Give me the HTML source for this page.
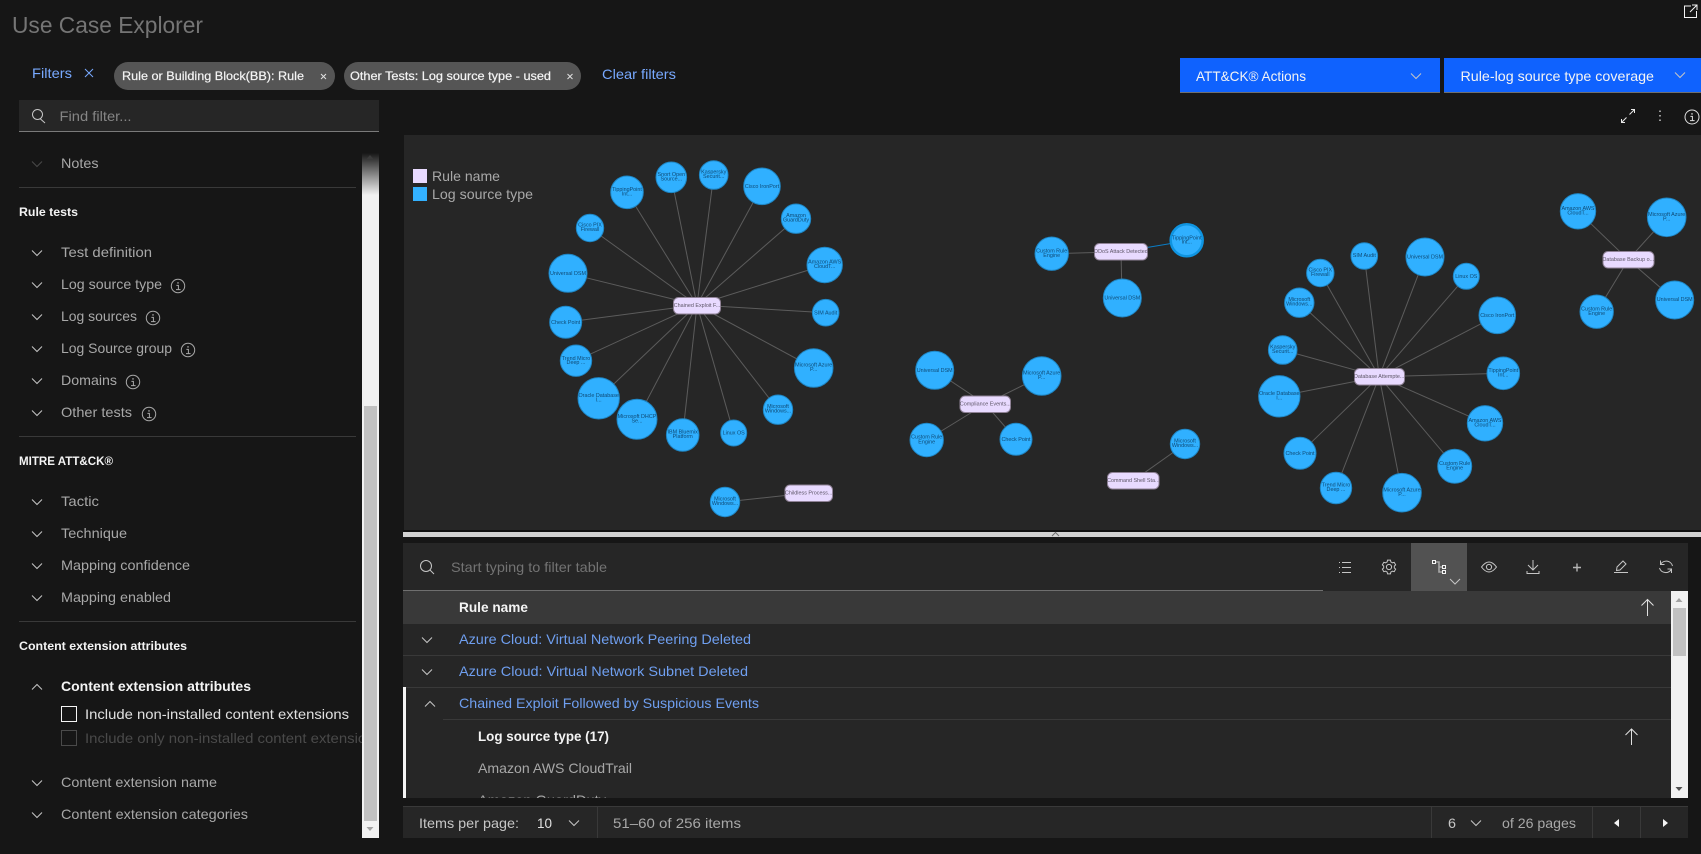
<!DOCTYPE html>
<html lang="en">
<head>
<meta charset="utf-8">
<title>Use Case Explorer</title>
<style>
html,body{margin:0;padding:0;background:#161616;width:1701px;height:854px;overflow:hidden}
svg{display:block;font-family:"Liberation Sans",Arial,sans-serif}
text{white-space:pre}
.t14{font-size:14px}
.t12{font-size:12px}
.dim{fill:#a8a8a8}
.mid{fill:#c6c6c6}
.link{fill:#78a9ff}
.b{font-weight:700;fill:#f4f4f4}
.ico{fill:none;stroke:#c6c6c6;stroke-width:1}
.e{stroke:#5c5c5c;stroke-width:1}
.c{fill:#30b0ff;stroke:#1f86c4;stroke-width:1}
.r{fill:#e8daff;stroke:#8f8296;stroke-width:1}
.n{font-size:5.4px;text-anchor:middle;fill:#0f4a75}
.m{font-size:5.4px;text-anchor:middle;fill:#5c5566}
.soft{filter:blur(.3px)}
</style>
</head>
<body>
<svg xmlns="http://www.w3.org/2000/svg" width="1701" height="854" viewBox="0 0 1701 854">
<defs>
<g id="cd"><path d="M-5-2.5 0 2.5 5-2.5" fill="none" stroke="#c6c6c6"/></g>
<g id="cu"><path d="M-5 2.5 0-2.5 5 2.5" fill="none" stroke="#c6c6c6"/></g>
<g id="inf"><circle r="6.7" fill="none" stroke="#a8a8a8"/><path d="M-1.6-.6H.4V3.6M-2 3.6H2.6" fill="none" stroke="#a8a8a8"/><rect x="-.7" y="-3.8" width="1.4" height="1.4" fill="#a8a8a8"/></g>
<linearGradient id="fade" x1="0" y1="0" x2="0" y2="1"><stop offset="0" stop-color="#161616"/><stop offset="1" stop-color="#f1f1f1"/></linearGradient>
<clipPath id="cl1"><rect x="0" y="140" width="362" height="714"/></clipPath>
<clipPath id="cl2"><rect x="403" y="591" width="1268" height="207"/></clipPath>
</defs>

<rect width="1701" height="854" fill="#161616"/>

<!-- Header -->
<text x="12" y="33" font-size="23" fill="#757575" textLength="191" lengthAdjust="spacingAndGlyphs">Use Case Explorer</text>
<path d="M1691 6H1684.5V17.5H1696.5V11M1690 12 1697 5M1692 5H1697V10" fill="none" stroke="#f4f4f4"/>

<!-- Filters bar -->
<text x="32" y="78" class="t14 link" textLength="40" lengthAdjust="spacingAndGlyphs">Filters</text>
<path d="M85 69 93 77M93 69 85 77" stroke="#78a9ff" fill="none"/>
<rect x="114" y="62" width="221" height="28" rx="14" fill="#555"/>
<text x="122" y="80" class="t12" fill="#f4f4f4" stroke="#f4f4f4" stroke-width=".2" textLength="182" lengthAdjust="spacingAndGlyphs">Rule or Building Block(BB): Rule</text>
<path d="M321 74 326 79M326 74 321 79" stroke="#e0e0e0" fill="none"/>
<rect x="344" y="62" width="237" height="28" rx="14" fill="#555"/>
<text x="350" y="80" class="t12" fill="#f4f4f4" stroke="#f4f4f4" stroke-width=".2" textLength="201" lengthAdjust="spacingAndGlyphs">Other Tests: Log source type - used</text>
<path d="M567.5 74 572.5 79M572.5 74 567.5 79" stroke="#e0e0e0" fill="none"/>
<text x="602" y="79" class="t14 link" textLength="74" lengthAdjust="spacingAndGlyphs">Clear filters</text>

<!-- Action buttons -->
<rect x="1180" y="58" width="260" height="35" fill="#0f62fe"/>
<rect x="1180" y="92" width="260" height="1" fill="#6f6f6f"/>
<text x="1196" y="81" class="t14" fill="#f4f4f4" textLength="110" lengthAdjust="spacingAndGlyphs">ATT&amp;CK® Actions</text>
<use href="#cd" x="1416" y="76"/>
<rect x="1444" y="58" width="257" height="35" fill="#0f62fe"/>
<rect x="1444" y="92" width="257" height="1" fill="#6f6f6f"/>
<text x="1460.5" y="81" class="t14" fill="#f4f4f4" textLength="193.5" lengthAdjust="spacingAndGlyphs">Rule-log source type coverage</text>
<use href="#cd" x="1680" y="75"/>

<!-- Graph toolbar icons -->
<path d="M1626.5 117.5 1621.5 122.5M1621.5 119V122.5H1625M1629.5 114.5 1634.5 109.5M1631 109.5H1634.5V113" fill="none" stroke="#e8e8e8"/>
<rect x="1659.25" y="110.5" width="1.5" height="1.5" fill="#c6c6c6"/><rect x="1659.25" y="115" width="1.5" height="1.5" fill="#c6c6c6"/><rect x="1659.25" y="119.5" width="1.5" height="1.5" fill="#c6c6c6"/>
<g transform="translate(1692 117)"><circle r="7" fill="none" stroke="#e0e0e0"/><path d="M-1.6-.6H.4V3.6M-2 3.6H2.6" fill="none" stroke="#e0e0e0"/><rect x="-.7" y="-3.8" width="1.4" height="1.4" fill="#e0e0e0"/></g>

<!-- Sidebar -->
<rect x="19" y="100" width="360" height="32" fill="#262626"/>
<rect x="19" y="131" width="360" height="1" fill="#7a7a7a"/>
<path d="M35.5 110a5 5 0 1 1 0 10a5 5 0 1 1 0-10M38.5 119.5 43 123.5" transform="translate(2 -.5)" fill="none" stroke="#c6c6c6"/>
<text x="59.5" y="121" class="t14" fill="#858585" textLength="72" lengthAdjust="spacingAndGlyphs">Find filter...</text>

<g clip-path="url(#cl1)">
<g transform="translate(37 164)"><path d="M-5-2.5 0 2.5 5-2.5" fill="none" stroke="#4a4a4a"/></g>
<text x="61" y="168" class="t14 dim" textLength="37.5" lengthAdjust="spacingAndGlyphs">Notes</text>
<rect x="19" y="187" width="337" height="1" fill="#393939"/>
<text x="19" y="216" class="t12 b" textLength="59" lengthAdjust="spacingAndGlyphs">Rule tests</text>

<use href="#cd" x="37" y="253"/><text x="61" y="257" class="t14 dim" textLength="91" lengthAdjust="spacingAndGlyphs">Test definition</text>
<use href="#cd" x="37" y="285"/><text x="61" y="289" class="t14 dim" textLength="101" lengthAdjust="spacingAndGlyphs">Log source type</text><use href="#inf" x="178" y="286"/>
<use href="#cd" x="37" y="317"/><text x="61" y="321" class="t14 dim" textLength="76" lengthAdjust="spacingAndGlyphs">Log sources</text><use href="#inf" x="153" y="318"/>
<use href="#cd" x="37" y="349"/><text x="61" y="353" class="t14 dim" textLength="111" lengthAdjust="spacingAndGlyphs">Log Source group</text><use href="#inf" x="188" y="350"/>
<use href="#cd" x="37" y="381"/><text x="61" y="385" class="t14 dim" textLength="56" lengthAdjust="spacingAndGlyphs">Domains</text><use href="#inf" x="133" y="382"/>
<use href="#cd" x="37" y="413"/><text x="61" y="417" class="t14 dim" textLength="71" lengthAdjust="spacingAndGlyphs">Other tests</text><use href="#inf" x="149" y="414"/>
<rect x="19" y="436" width="337" height="1" fill="#393939"/>
<text x="19" y="465" class="t12 b" textLength="94" lengthAdjust="spacingAndGlyphs">MITRE ATT&amp;CK®</text>

<use href="#cd" x="37" y="502"/><text x="61" y="506" class="t14 dim" textLength="38" lengthAdjust="spacingAndGlyphs">Tactic</text>
<use href="#cd" x="37" y="534"/><text x="61" y="538" class="t14 dim" textLength="66" lengthAdjust="spacingAndGlyphs">Technique</text>
<use href="#cd" x="37" y="566"/><text x="61" y="570" class="t14 dim" textLength="129" lengthAdjust="spacingAndGlyphs">Mapping confidence</text>
<use href="#cd" x="37" y="598"/><text x="61" y="602" class="t14 dim" textLength="110" lengthAdjust="spacingAndGlyphs">Mapping enabled</text>
<rect x="19" y="621" width="337" height="1" fill="#393939"/>
<text x="19" y="650" class="t12 b" textLength="168" lengthAdjust="spacingAndGlyphs">Content extension attributes</text>

<use href="#cu" x="37" y="687"/><text x="61" y="691" class="t14 b" textLength="190" lengthAdjust="spacingAndGlyphs">Content extension attributes</text>
<rect x="61.5" y="706.5" width="15" height="15" fill="none" stroke="#f4f4f4"/>
<text x="85" y="719" class="t14" fill="#e0e0e0" textLength="264" lengthAdjust="spacingAndGlyphs">Include non-installed content extensions</text>
<rect x="61.5" y="730.5" width="15" height="15" fill="none" stroke="#4a4a4a"/>
<text x="85" y="743" class="t14" fill="#4a4a4a" textLength="297" lengthAdjust="spacingAndGlyphs">Include only non-installed content extensions</text>
<use href="#cd" x="37" y="783"/><text x="61" y="787" class="t14 dim" textLength="156" lengthAdjust="spacingAndGlyphs">Content extension name</text>
<use href="#cd" x="37" y="815"/><text x="61" y="819" class="t14 dim" textLength="187" lengthAdjust="spacingAndGlyphs">Content extension categories</text>
</g>

<!-- Sidebar scrollbar -->
<rect x="362" y="153" width="17" height="685" fill="#f1f1f1"/>
<rect x="364" y="406" width="13" height="415" fill="#c1c1c1"/>
<rect x="362" y="153" width="17" height="42" fill="url(#fade)"/>
<path d="M366.5 159 370 155 373.5 159Z" fill="#3a3a3a"/>
<path d="M366.5 827H373.5L370 831Z" fill="#a3a3a3"/>

<!-- Graph panel -->
<rect x="404" y="135" width="1297" height="395" fill="#262626"/>
<rect x="413" y="169" width="14" height="14" fill="#e8daff"/>
<rect x="413" y="187" width="14" height="14" fill="#33b1ff"/>
<text x="432" y="181" class="t14 dim" textLength="68" lengthAdjust="spacingAndGlyphs">Rule name</text>
<text x="432" y="199" class="t14 dim" textLength="101" lengthAdjust="spacingAndGlyphs">Log source type</text>

<g class="soft">
<!-- Edges -->
<g class="e">
<line x1="697" y1="305" x2="627" y2="192.3"/><line x1="697" y1="305" x2="671.3" y2="177.3"/><line x1="697" y1="305" x2="713.7" y2="175"/><line x1="697" y1="305" x2="762" y2="186.3"/><line x1="697" y1="305" x2="796" y2="218.7"/><line x1="697" y1="305" x2="824.7" y2="265"/><line x1="697" y1="305" x2="825.7" y2="312.7"/><line x1="697" y1="305" x2="813.7" y2="368"/><line x1="697" y1="305" x2="778" y2="409.7"/><line x1="697" y1="305" x2="733.7" y2="433"/><line x1="697" y1="305" x2="682.7" y2="435"/><line x1="697" y1="305" x2="637" y2="419.3"/><line x1="697" y1="305" x2="598.7" y2="398.3"/><line x1="697" y1="305" x2="576" y2="360.7"/><line x1="697" y1="305" x2="565.7" y2="322.3"/><line x1="697" y1="305" x2="568" y2="273.3"/><line x1="697" y1="305" x2="590" y2="228"/>
<line x1="808" y1="493" x2="725" y2="502"/>
<line x1="1121" y1="251.7" x2="1051.7" y2="253.7"/><line x1="1121" y1="251.7" x2="1122" y2="298"/>
<line x1="985.3" y1="404" x2="934.7" y2="370.3"/><line x1="985.3" y1="404" x2="1041.7" y2="376"/><line x1="985.3" y1="404" x2="926.7" y2="440"/><line x1="985.3" y1="404" x2="1016" y2="439.3"/>
<line x1="1133.3" y1="480.7" x2="1185" y2="444"/>
<line x1="1379.2" y1="376.7" x2="1364.3" y2="256"/><line x1="1379.2" y1="376.7" x2="1425" y2="257"/><line x1="1379.2" y1="376.7" x2="1466.3" y2="276.3"/><line x1="1379.2" y1="376.7" x2="1497.3" y2="315.3"/><line x1="1379.2" y1="376.7" x2="1503.3" y2="373.3"/><line x1="1379.2" y1="376.7" x2="1485" y2="423.3"/><line x1="1379.2" y1="376.7" x2="1454.7" y2="466.3"/><line x1="1379.2" y1="376.7" x2="1402" y2="492.7"/><line x1="1379.2" y1="376.7" x2="1336" y2="488"/><line x1="1379.2" y1="376.7" x2="1300" y2="453.3"/><line x1="1379.2" y1="376.7" x2="1279.3" y2="396.3"/><line x1="1379.2" y1="376.7" x2="1282.7" y2="350"/><line x1="1379.2" y1="376.7" x2="1299.3" y2="302.7"/><line x1="1379.2" y1="376.7" x2="1320.3" y2="273"/>
<line x1="1628.3" y1="259.7" x2="1578" y2="211.3"/><line x1="1628.3" y1="259.7" x2="1666.7" y2="217.3"/><line x1="1628.3" y1="259.7" x2="1674.7" y2="300"/><line x1="1628.3" y1="259.7" x2="1596.7" y2="311.7"/>
</g>
<line x1="1147" y1="247.5" x2="1186" y2="241" stroke="#0a7cc4" stroke-width="1"/>

<!-- Cluster 1 -->
<g>
<circle class="c" cx="627" cy="192.3" r="16.3"/><text class="n" x="627" y="190.8">TippingPoint</text><text class="n" x="627" y="195.5">Int...</text>
<circle class="c" cx="671.3" cy="177.3" r="15.3"/><text class="n" x="671.3" y="175.8">Snort Open</text><text class="n" x="671.3" y="180.5">Source...</text>
<circle class="c" cx="713.7" cy="175" r="14.3"/><text class="n" x="713.7" y="173.5">Kaspersky</text><text class="n" x="713.7" y="178.2">Securit...</text>
<circle class="c" cx="762" cy="186.3" r="18.3"/><text class="n" x="762" y="188">Cisco IronPort</text>
<circle class="c" cx="796" cy="218.7" r="14.7"/><text class="n" x="796" y="217">Amazon</text><text class="n" x="796" y="221.5">GuardDuty</text>
<circle class="c" cx="824.7" cy="265" r="17.7"/><text class="n" x="824.7" y="263.5">Amazon AWS</text><text class="n" x="824.7" y="268.2">CloudT...</text>
<circle class="c" cx="825.7" cy="312.7" r="13.3"/><text class="n" x="825.7" y="314.4">SIM Audit</text>
<circle class="c" cx="813.7" cy="368" r="19.3"/><text class="n" x="813.7" y="366.5">Microsoft Azure</text><text class="n" x="813.7" y="371.2">P...</text>
<circle class="c" cx="778" cy="409.7" r="14.7"/><text class="n" x="778" y="408">Microsoft</text><text class="n" x="778" y="412.5">Windows...</text>
<circle class="c" cx="733.7" cy="433" r="13"/><text class="n" x="733.7" y="434.7">Linux OS</text>
<circle class="c" cx="682.7" cy="435" r="16.3"/><text class="n" x="682.7" y="433.5">IBM Bluemix</text><text class="n" x="682.7" y="438.2">Platform</text>
<circle class="c" cx="637" cy="419.3" r="20"/><text class="n" x="637" y="418">Microsoft DHCP</text><text class="n" x="637" y="422.5">Se...</text>
<circle class="c" cx="598.7" cy="398.3" r="20.7"/><text class="n" x="598.7" y="397">Oracle Database</text><text class="n" x="598.7" y="401.5">I...</text>
<circle class="c" cx="576" cy="360.7" r="15.7"/><text class="n" x="576" y="360">Trend Micro</text><text class="n" x="576" y="364">Deep ...</text>
<circle class="c" cx="565.7" cy="322.3" r="16"/><text class="n" x="565.7" y="324">Check Point</text>
<circle class="c" cx="568" cy="273.3" r="19"/><text class="n" x="568" y="275">Universal DSM</text>
<circle class="c" cx="590" cy="228" r="13.7"/><text class="n" x="590" y="226.5">Cisco PIX</text><text class="n" x="590" y="231.2">Firewall</text>
<rect class="r" x="673.5" y="297.5" width="47" height="16.5" rx="5"/><text class="m" x="697" y="307">Chained Exploit F...</text>
<circle class="c" cx="725" cy="502" r="14.7"/><text class="n" x="725" y="500.5">Microsoft</text><text class="n" x="725" y="505">Windows...</text>
<rect class="r" x="785" y="485" width="47.5" height="16.5" rx="5"/><text class="m" x="808.7" y="494.5">Childless Process...</text>
</g>

<!-- Cluster 2 -->
<g>
<circle class="c" cx="1051.7" cy="253.7" r="16.7"/><text class="n" x="1051.7" y="252.5">Custom Rule</text><text class="n" x="1051.7" y="257">Engine</text>
<circle cx="1186.7" cy="240.3" r="16" fill="#30b0ff" stroke="#0f94e0" stroke-width="2.5"/><text class="n" x="1186.7" y="239.3">TippingPoint</text><text class="n" x="1186.7" y="243.5">Int...</text>
<circle class="c" cx="1122.3" cy="298" r="19"/><text class="n" x="1122.3" y="299.7">Universal DSM</text>
<rect class="r" x="1094.5" y="243.5" width="53" height="16.5" rx="5"/><text class="m" x="1121" y="253">DDoS Attack Detected</text>
<circle class="c" cx="934.7" cy="370.3" r="19"/><text class="n" x="934.7" y="372">Universal DSM</text>
<circle class="c" cx="1041.7" cy="376" r="19.3"/><text class="n" x="1041.7" y="374.5">Microsoft Azure</text><text class="n" x="1041.7" y="379.2">P...</text>
<circle class="c" cx="926.7" cy="440" r="16.7"/><text class="n" x="926.7" y="438.7">Custom Rule</text><text class="n" x="926.7" y="443.4">Engine</text>
<circle class="c" cx="1016" cy="439.3" r="16"/><text class="n" x="1016" y="441">Check Point</text>
<rect class="r" x="960" y="396" width="50.5" height="16.5" rx="5"/><text class="m" x="985.3" y="405.5">Compliance Events...</text>
<circle class="c" cx="1185" cy="444" r="14.7"/><text class="n" x="1185" y="442.5">Microsoft</text><text class="n" x="1185" y="447.2">Windows...</text>
<rect class="r" x="1107.5" y="472.5" width="51.5" height="16.5" rx="5"/><text class="m" x="1133.3" y="482">Command Shell Sta...</text>
</g>

<!-- Cluster 3 -->
<g>
<circle class="c" cx="1364.3" cy="256" r="13.3"/><text class="n" x="1364.3" y="257">SIM Audit</text>
<circle class="c" cx="1425" cy="257" r="19"/><text class="n" x="1425" y="258.7">Universal DSM</text>
<circle class="c" cx="1466.3" cy="276.3" r="13"/><text class="n" x="1466.3" y="278">Linux OS</text>
<circle class="c" cx="1497.3" cy="315.3" r="18.3"/><text class="n" x="1497.3" y="317">Cisco IronPort</text>
<circle class="c" cx="1503.3" cy="373.3" r="16.3"/><text class="n" x="1503.3" y="372">TippingPoint</text><text class="n" x="1503.3" y="376.7">Int...</text>
<circle class="c" cx="1485" cy="423.3" r="17.7"/><text class="n" x="1485" y="421.8">Amazon AWS</text><text class="n" x="1485" y="426.5">CloudT...</text>
<circle class="c" cx="1454.7" cy="466.3" r="17"/><text class="n" x="1454.7" y="464.8">Custom Rule</text><text class="n" x="1454.7" y="469.5">Engine</text>
<circle class="c" cx="1402" cy="492.7" r="19.3"/><text class="n" x="1402" y="491.5">Microsoft Azure</text><text class="n" x="1402" y="496">P...</text>
<circle class="c" cx="1336" cy="488" r="15.7"/><text class="n" x="1336" y="486.5">Trend Micro</text><text class="n" x="1336" y="491.2">Deep ...</text>
<circle class="c" cx="1300" cy="453.3" r="16"/><text class="n" x="1300" y="455">Check Point</text>
<circle class="c" cx="1279.3" cy="396.3" r="20.7"/><text class="n" x="1279.3" y="395">Oracle Database</text><text class="n" x="1279.3" y="399.7">I...</text>
<circle class="c" cx="1282.7" cy="350" r="14.3"/><text class="n" x="1282.7" y="348.5">Kaspersky</text><text class="n" x="1282.7" y="353.2">Securit...</text>
<circle class="c" cx="1299.3" cy="302.7" r="14.7"/><text class="n" x="1299.3" y="301">Microsoft</text><text class="n" x="1299.3" y="305.5">Windows...</text>
<circle class="c" cx="1320.3" cy="273" r="13.7"/><text class="n" x="1320.3" y="271.5">Cisco PIX</text><text class="n" x="1320.3" y="276.2">Firewall</text>
<rect class="r" x="1354.5" y="368.5" width="50" height="16.5" rx="5"/><text class="m" x="1379.2" y="378.2">Database Attempte...</text>
<circle class="c" cx="1578" cy="211.3" r="17.7"/><text class="n" x="1578" y="209.8">Amazon AWS</text><text class="n" x="1578" y="214.5">CloudT...</text>
<circle class="c" cx="1666.7" cy="217.3" r="19.3"/><text class="n" x="1666.7" y="215.8">Microsoft Azure</text><text class="n" x="1666.7" y="220.5">P...</text>
<circle class="c" cx="1674.7" cy="300" r="19"/><text class="n" x="1674.7" y="301">Universal DSM</text>
<circle class="c" cx="1596.7" cy="311.7" r="16.7"/><text class="n" x="1596.7" y="310.5">Custom Rule</text><text class="n" x="1596.7" y="315">Engine</text>
<rect class="r" x="1603" y="251.5" width="51" height="16.5" rx="5"/><text class="m" x="1628.3" y="261.2">Database Backup o...</text>
</g>
</g>

<!-- Resize handle -->
<rect x="403" y="530" width="1298" height="2" fill="#101010"/>
<rect x="403" y="532" width="1298" height="5" fill="#d2d2d2"/>
<path d="M1052 536 1055.5 532.5 1059 536" fill="none" stroke="#6f6f6f" stroke-width="1"/>

<!-- Table toolbar -->
<rect x="403" y="543" width="1285" height="48" fill="#262626"/>
<rect x="403" y="590" width="920" height="1" fill="#6f6f6f"/>
<circle cx="426" cy="566" r="5.5" fill="none" stroke="#c6c6c6"/><path d="M430 570 434 574" stroke="#c6c6c6" fill="none"/>
<text x="451" y="572" class="t14" fill="#737373" textLength="156" lengthAdjust="spacingAndGlyphs">Start typing to filter table</text>

<!-- list -->
<path d="M1342 562.5H1351M1342 567.5H1351M1342 572.5H1351" stroke="#c6c6c6" fill="none"/>
<path d="M1339 562.5H1340M1339 567.5H1340M1339 572.5H1340" stroke="#c6c6c6" fill="none"/>
<!-- gear -->
<g transform="translate(1389 567)"><path class="ico" d="M-1.46-6.85 1.46-6.85 1.85-5.07 3.47-4.14 5.2-4.68 6.66-2.16 5.32-.94 5.32.94 6.66 2.16 5.2 4.68 3.47 4.14 1.85 5.07 1.46 6.85-1.46 6.85-1.85 5.07-3.47 4.14-5.2 4.68-6.66 2.16-5.32.94-5.32-.94-6.66-2.16-5.2-4.68-3.47-4.14-1.85-5.07Z"/><circle r="2.6" class="ico"/></g>
<!-- tree active -->
<rect x="1411" y="543" width="56" height="48" fill="#525252"/>
<path d="M1436 562H1439V572H1442M1439 567H1442" fill="none" stroke="#a8a8a8" stroke-width="1.6"/>
<rect x="1432.5" y="560.5" width="3" height="3" fill="#525252" stroke="#f4f4f4"/>
<rect x="1442.5" y="565.5" width="3" height="3" fill="#525252" stroke="#f4f4f4"/>
<rect x="1442.5" y="570.5" width="3" height="3" fill="#525252" stroke="#f4f4f4"/>
<use href="#cd" x="1455" y="581.5"/>
<!-- eye -->
<g transform="translate(1489 567)"><path class="ico" d="M-7.5 0Q0-10 7.5 0 0 10-7.5 0Z"/><circle r="2.6" class="ico"/></g>
<!-- download -->
<path class="ico" d="M1533 560V570M1528 565 1533 570 1538 565M1527 571V573.5H1539V571"/>
<!-- plus -->
<path d="M1573 567.5H1581M1577 563.5V571.5" stroke="#b4b4b4" stroke-width="1.4" fill="none"/>
<!-- edit -->
<path class="ico" d="M1614 572.5H1628M1616.5 570.5 1617 567 1623 561 1626 564 1620 570Z"/>
<!-- refresh -->
<path class="ico" d="M1660.5 560.5V564.5H1664.5M1660.5 564.5A6.5 6.5 0 0 1 1672.5 566M1671.5 573V569H1667.5M1671.5 569A6.5 6.5 0 0 1 1659.5 568"/>

<!-- Table -->
<rect x="403" y="591" width="1268" height="207" fill="#262626"/>
<rect x="403" y="591" width="1268" height="33" fill="#393939"/>
<text x="459" y="612" class="t14 b" textLength="69" lengthAdjust="spacingAndGlyphs">Rule name</text>
<path d="M1647.5 599.5V616M1641.5 605.5 1647.5 599.5 1653.5 605.5" fill="none" stroke="#e0e0e0"/>

<use href="#cd" x="427" y="640"/>
<text x="459" y="644" class="t14" fill="#6f9ff0" textLength="292" lengthAdjust="spacingAndGlyphs">Azure Cloud: Virtual Network Peering Deleted</text>
<rect x="403" y="655" width="1268" height="1" fill="#393939"/>
<use href="#cd" x="427" y="672"/>
<text x="459" y="676" class="t14" fill="#6f9ff0" textLength="289" lengthAdjust="spacingAndGlyphs">Azure Cloud: Virtual Network Subnet Deleted</text>
<rect x="403" y="687" width="1268" height="1" fill="#393939"/>
<use href="#cu" x="430" y="704"/>
<text x="459" y="708" class="t14" fill="#6f9ff0" textLength="300" lengthAdjust="spacingAndGlyphs">Chained Exploit Followed by Suspicious Events</text>
<rect x="443" y="719" width="1228" height="1" fill="#393939"/>
<rect x="403" y="687" width="3" height="111" fill="#f4f4f4"/>
<text x="478" y="741" class="t14 b" textLength="131" lengthAdjust="spacingAndGlyphs">Log source type (17)</text>
<path d="M1631.5 729V745M1625.5 735 1631.5 729 1637.5 735" fill="none" stroke="#e0e0e0"/>
<text x="478" y="773" class="t14 dim" textLength="154" lengthAdjust="spacingAndGlyphs">Amazon AWS CloudTrail</text>
<g clip-path="url(#cl2)"><text x="478" y="805" class="t14 dim" textLength="128" lengthAdjust="spacingAndGlyphs">Amazon GuardDuty</text></g>

<!-- Table scrollbar -->
<rect x="1671" y="591" width="17" height="207" fill="#f1f1f1"/>
<rect x="1673" y="608" width="13" height="48" fill="#c1c1c1"/>
<path d="M1675.5 602 1679 598 1682.5 602Z" fill="#a3a3a3"/>
<path d="M1675.5 787H1682.5L1679 791Z" fill="#505050"/>

<!-- Pagination -->
<rect x="403" y="806" width="1285" height="32" fill="#262626"/>
<rect x="403" y="806" width="1285" height="1" fill="#393939"/>
<text x="419" y="828" class="t14 mid" textLength="100" lengthAdjust="spacingAndGlyphs">Items per page:</text>
<text x="537" y="828" class="t14" fill="#e0e0e0" textLength="15" lengthAdjust="spacingAndGlyphs">10</text>
<use href="#cd" x="574" y="823"/>
<rect x="597" y="806" width="1" height="32" fill="#393939"/>
<text x="613" y="828" class="t14 dim" textLength="128" lengthAdjust="spacingAndGlyphs">51–60 of 256 items</text>
<rect x="1431" y="806" width="1" height="32" fill="#393939"/>
<text x="1448" y="828" class="t14 mid" textLength="8" lengthAdjust="spacingAndGlyphs">6</text>
<use href="#cd" x="1476" y="823"/>
<text x="1502" y="828" class="t14 dim" textLength="74" lengthAdjust="spacingAndGlyphs">of 26 pages</text>
<rect x="1592" y="806" width="1" height="32" fill="#393939"/>
<path d="M1619 819V827L1614 823Z" fill="#f4f4f4"/>
<rect x="1640" y="806" width="1" height="32" fill="#393939"/>
<path d="M1663 819V827L1668 823Z" fill="#f4f4f4"/>
</svg>
</body>
</html>
